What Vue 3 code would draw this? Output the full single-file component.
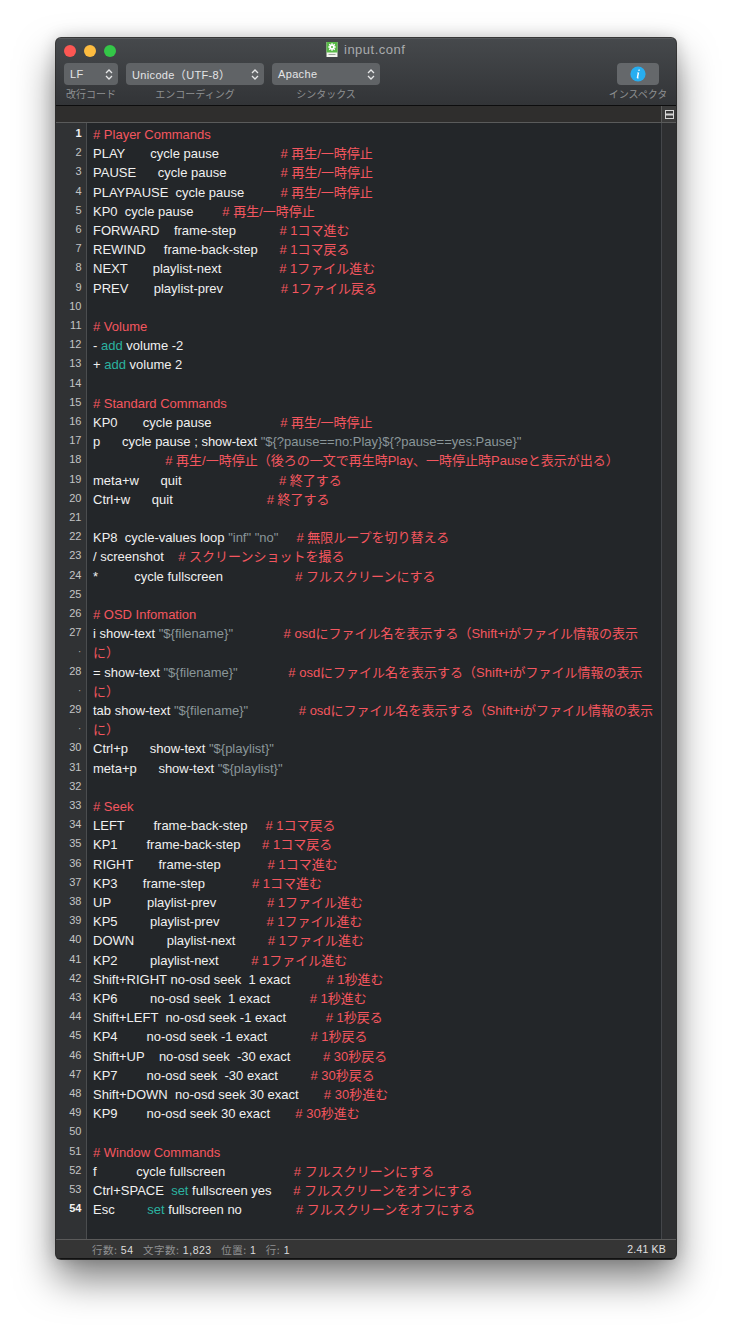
<script setup>
const raw = [
'# Player Commands',
'PLAY       cycle pause                 # 再生/一時停止',
'PAUSE      cycle pause               # 再生/一時停止',
'PLAYPAUSE  cycle pause          # 再生/一時停止',
'KP0  cycle pause        # 再生/一時停止',
'FORWARD    frame-step            # 1コマ進む',
'REWIND     frame-back-step      # 1コマ戻る',
'NEXT       playlist-next                # 1ファイル進む',
'PREV       playlist-prev                # 1ファイル戻る',
'',
'# Volume',
'- add volume -2',
'+ add volume 2',
'',
'# Standard Commands',
'KP0       cycle pause                   # 再生/一時停止',
'p      cycle pause ; show-text "${?pause==no:Play}${?pause==yes:Pause}"',
'                    # 再生/一時停止（後ろの一文で再生時Play、一時停止時Pauseと表示が出る）',
'meta+w      quit                           # 終了する',
'Ctrl+w      quit                          # 終了する',
'',
'KP8  cycle-values loop "inf" "no"     # 無限ループを切り替える',
'/ screenshot    # スクリーンショットを撮る',
'*          cycle fullscreen                    # フルスクリーンにする',
'',
'# OSD Infomation',
'i show-text "${filename}"              # osdにファイル名を表示する（Shift+iがファイル情報の表示|に）',
'= show-text "${filename}"              # osdにファイル名を表示する（Shift+iがファイル情報の表示|に）',
'tab show-text "${filename}"              # osdにファイル名を表示する（Shift+iがファイル情報の表示|に）',
'Ctrl+p      show-text "${playlist}"',
'meta+p      show-text "${playlist}"',
'',
'# Seek',
'LEFT        frame-back-step     # 1コマ戻る',
'KP1        frame-back-step      # 1コマ戻る',
'RIGHT       frame-step             # 1コマ進む',
'KP3       frame-step             # 1コマ進む',
'UP          playlist-prev              # 1ファイル進む',
'KP5         playlist-prev             # 1ファイル進む',
'DOWN         playlist-next         # 1ファイル進む',
'KP2         playlist-next         # 1ファイル進む',
'Shift+RIGHT no-osd seek  1 exact          # 1秒進む',
'KP6         no-osd seek  1 exact           # 1秒進む',
'Shift+LEFT  no-osd seek -1 exact           # 1秒戻る',
'KP4        no-osd seek -1 exact            # 1秒戻る',
'Shift+UP    no-osd seek  -30 exact         # 30秒戻る',
'KP7        no-osd seek  -30 exact         # 30秒戻る',
'Shift+DOWN  no-osd seek 30 exact       # 30秒進む',
'KP9        no-osd seek 30 exact       # 30秒進む',
'',
'# Window Commands',
'f           cycle fullscreen                   # フルスクリーンにする',
'Ctrl+SPACE  set fullscreen yes      # フルスクリーンをオンにする',
'Esc         set fullscreen no               # フルスクリーンをオフにする',
]

const lines = raw.map((source, i) => {
  const [text, tail] = source.split('|')
  const hash = text.indexOf('#')
  const code = hash >= 0 ? text.slice(0, hash) : text
  const comment = hash >= 0 ? text.slice(hash) : ''
  const parts = []
  code.split(/("[^"]*"|\b(?:add|set)\b(?= ))/).forEach((t) => {
    if (!t) return
    let kind = 'plain'
    if (t.startsWith('"')) kind = 'str'
    else if (t === 'add' || t === 'set') kind = 'kw'
    parts.push({ t, kind })
  })
  if (comment) parts.push({ t: comment, kind: 'com' })
  return { n: i + 1, parts, tail, bold: i === 0 || i === 53 }
})
</script>

<template>
  <div class="page">
    <div class="win">
      <header class="toolbar">
        <div class="titlebar">
          <div class="lights">
            <span class="light red"></span>
            <span class="light yellow"></span>
            <span class="light green"></span>
          </div>
          <div class="title">
            <svg width="12" height="15" viewBox="0 0 12 15" class="docicon">
              <rect x="0.5" y="0" width="11" height="15" fill="#f2f4ee"/>
              <rect x="0.5" y="0" width="11" height="10.5" fill="#58b947"/>
              <circle cx="6" cy="5" r="2.8" fill="#fff"/>
              <path d="M6 1v8M2 5h8M3.2 2.2l5.6 5.6M8.8 2.2l-5.6 5.6" stroke="#fff" stroke-width="1.1"/>
              <circle cx="6" cy="5" r="1.1" fill="#58b947"/>
              <rect x="2.5" y="12" width="7" height="1" fill="#9aa09a"/>
            </svg>
            <span>input.conf</span>
          </div>
        </div>
        <div class="tools">
          <div class="tool w-lf">
            <div class="select"><span>LF</span><svg class="updown" width="8" height="13" viewBox="0 0 8 13"><path d="M1 5l3-3 3 3M1 8l3 3 3-3" fill="none" stroke="#e6e7e8" stroke-width="1.3"/></svg></div>
            <div class="cap">改行コード</div>
          </div>
          <div class="tool w-enc">
            <div class="select"><span>Unicode（UTF-8）</span><svg class="updown" width="8" height="13" viewBox="0 0 8 13"><path d="M1 5l3-3 3 3M1 8l3 3 3-3" fill="none" stroke="#e6e7e8" stroke-width="1.3"/></svg></div>
            <div class="cap">エンコーディング</div>
          </div>
          <div class="tool w-syn">
            <div class="select"><span>Apache</span><svg class="updown" width="8" height="13" viewBox="0 0 8 13"><path d="M1 5l3-3 3 3M1 8l3 3 3-3" fill="none" stroke="#e6e7e8" stroke-width="1.3"/></svg></div>
            <div class="cap">シンタックス</div>
          </div>
          <div class="tool w-ins">
            <div class="insbtn">
              <svg width="16" height="16" viewBox="0 0 16 16">
                <circle cx="8" cy="8" r="7.6" fill="#27aef0"/>
                <path d="M8.6 3.5h1.2l-.3 1.4H8.3zM7.2 6.6h2L8.2 11.4c-.1.3.1.4.6.2l-.1.6c-.4.2-.7.2-1.1.2-.7 0-1-.4-.8-1.1l.8-4.1-.5-.1z" fill="#fff"/>
              </svg>
            </div>
            <div class="cap">インスペクタ</div>
          </div>
        </div>
      </header>
      <div class="strip">
        <div class="splitbtn">
          <svg width="9" height="9" viewBox="0 0 9 9"><rect x="0.5" y="0.5" width="8" height="8" fill="none" stroke="#d6d6d6"/><rect x="0" y="3.5" width="9" height="2" fill="#d6d6d6"/></svg>
        </div>
      </div>
      <main class="editor">
        <div class="doc">
          <div v-for="l in lines" :key="l.n" class="row">
            <div class="gutter">
              <div class="num" :class="{ bold: l.bold }">{{ l.n }}</div>
              <div v-if="l.tail" class="num dot">·</div>
            </div>
            <div class="code">
              <div class="codeline"><span v-for="(p, j) in l.parts" :key="j" :class="p.kind">{{ p.t }}</span></div>
              <div v-if="l.tail" class="codeline com">{{ l.tail }}</div>
            </div>
          </div>
          <div class="filler"><div class="gutter"></div></div>
        </div>
        <div class="scroller"></div>
      </main>
      <footer class="status">
        <div class="stats">
          <span><i>行数:</i> 54</span>
          <span><i>文字数:</i> 1,823</span>
          <span><i>位置:</i> 1</span>
          <span><i>行:</i> 1</span>
        </div>
        <div class="size">2.41 KB</div>
      </footer>
    </div>
  </div>
</template>

<style>
html, body { margin: 0; background: #fff; }
</style>

<style scoped>
.page {
  width: 732px;
  height: 1333px;
  box-sizing: border-box;
  padding: 38px 56px 0;
  background: #fff;
  overflow: hidden;
  font-family: "Liberation Sans", "Noto Sans CJK JP", sans-serif;
}
.win {
  height: 1221px;
  display: flex;
  flex-direction: column;
  border-radius: 5px;
  overflow: hidden;
  box-shadow: 0 0 0 1px rgba(0, 0, 0, .75), 0 20px 38px rgba(0, 0, 0, .5), 0 0 16px rgba(0, 0, 0, .18);
  background: #232629;
}
.toolbar {
  height: 68px;
  flex: none;
  box-sizing: border-box;
  padding: 0 8px;
  background: linear-gradient(#46494c, #323437);
  border-bottom: 1px solid #0d0d0e;
  box-shadow: inset 0 1px 0 #55585b;
}
.titlebar {
  height: 25px;
  display: flex;
  align-items: center;
  position: relative;
}
.lights {
  display: flex;
  gap: 8px;
}
.light {
  width: 12px;
  height: 12px;
  border-radius: 50%;
}
.red { background: #fc5753; }
.yellow { background: #fdbc40; }
.green { background: #34c748; }
.title {
  position: absolute;
  left: 262px;
  top: 2px;
  display: flex;
  align-items: center;
  gap: 6px;
  font-size: 13px;
  line-height: 19px;
  color: #a9abad;
  letter-spacing: .5px;
}
.tools {
  display: flex;
  gap: 8px;
}
.tool {
  display: flex;
  flex-direction: column;
  align-items: center;
}
.w-lf { width: 54px; }
.w-enc { width: 138px; }
.w-syn { width: 108px; }
.w-ins { margin-left: auto; width: 60px; }
.select, .insbtn {
  height: 22px;
  width: 100%;
  box-sizing: border-box;
  border-radius: 4px;
  background: #606366;
  display: flex;
  align-items: center;
  color: #e4e5e6;
}
.select {
  justify-content: space-between;
  padding: 0 5px 0 6px;
  font-size: 11px;
  letter-spacing: .35px;
}
.insbtn {
  width: 42px;
  justify-content: center;
  background: #65686b;
}
.cap {
  margin-top: 2px;
  font-size: 10px;
  line-height: 14px;
  color: #8e9092;
  white-space: nowrap;
  font-family: "Noto Sans CJK JP", sans-serif;
}
.strip {
  height: 16px;
  flex: none;
  display: flex;
  justify-content: flex-end;
  background: #2f2e2d;
  border-bottom: 1px solid #5a5b5b;
}
.splitbtn {
  width: 15px;
  box-sizing: border-box;
  border-left: 1px solid #5a5b5b;
  display: flex;
  align-items: center;
  justify-content: center;
  background: #3b3b3b;
}
.editor {
  flex: 1;
  min-height: 0;
  display: flex;
  overflow: hidden;
  position: relative;
}
.doc {
  flex: 1;
  min-width: 0;
  display: flex;
  flex-direction: column;
  padding-top: 2px;
  background: linear-gradient(90deg, #303234 30px, #4b4d4f 30px, #4b4d4f 31px, transparent 31px);
}
.row {
  display: flex;
}
.filler {
  flex: 1;
  display: flex;
}
.gutter {
  width: 31px;
  flex: none;
  box-sizing: border-box;
  padding-right: 5.5px;
}
.num {
  height: 19.2px;
  line-height: 19.2px;
  text-align: right;
  font-size: 11px;
  color: #c3c4c5;
  font-family: "Liberation Sans Narrow", "Liberation Sans", sans-serif;
  position: relative;
  top: -1px;
}
.num.bold { font-weight: 700; color: #f2f2f2; }
.num.dot { color: #a5a6a7; }
.code {
  flex: 1;
  min-width: 0;
  padding-left: 6px;
  font-size: 13px;
  line-height: 19.2px;
  color: #f0f0f0;
}
.codeline {
  min-height: 19.2px;
  white-space: pre;
}
.plain { color: #f0f0f0; }
.kw { color: #2bb3a0; }
.str { color: #8a9699; }
.com { color: #f4565f; }
.scroller {
  width: 15px;
  flex: none;
  background: #2e2f31;
  border-left: 1px solid #44464a;
  box-sizing: border-box;
}
.status {
  height: 20px;
  flex: none;
  box-sizing: border-box;
  display: flex;
  align-items: center;
  justify-content: space-between;
  padding: 0 10px 0 36px;
  background: #353535;
  border-top: 1px solid #5a5a5a;
  border-bottom: 1px solid #111;
  font-size: 10.5px;
  letter-spacing: .5px;
  color: #dcdcdc;
}
.stats {
  display: flex;
  gap: 9.5px;
}
.stats i {
  font-style: normal;
  color: #8f9091;
  font-family: "Noto Sans CJK JP", sans-serif;
}
.size { color: #e0e0e0; letter-spacing: .2px; }
</style>
